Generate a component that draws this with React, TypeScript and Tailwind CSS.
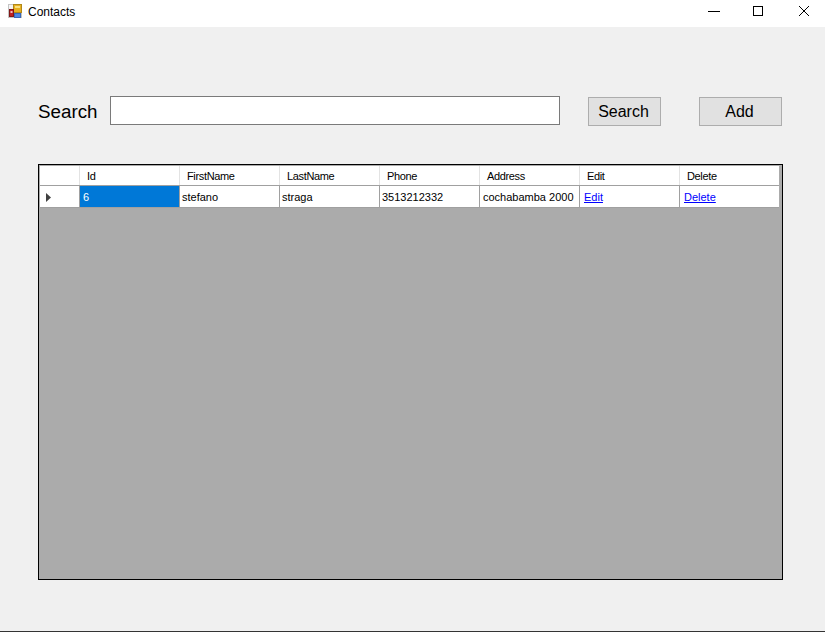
import React from 'react';

const columns = ['Id', 'FirstName', 'LastName', 'Phone', 'Address', 'Edit', 'Delete'];

const AppIcon: React.FC = () => (
  <svg width="14" height="14" viewBox="0 0 14 14" className="shrink-0">
    <rect x="0" y="0" width="14" height="14" fill="#c4c4c4" />
    <rect x="1" y="1" width="12" height="12" fill="#f4f4f4" />
    <rect x="5.5" y="0.5" width="8" height="8" fill="#e8b020" stroke="#b08818" strokeWidth="1" />
    <rect x="7" y="2" width="5" height="2" fill="#f8e080" />
    <rect x="1.5" y="5.5" width="4" height="7" fill="#c02020" stroke="#801818" strokeWidth="1" />
    <rect x="2.5" y="7" width="2" height="2" fill="#f0c0c0" />
    <rect x="6.5" y="9.5" width="6" height="4" fill="#5088e0" stroke="#3868b8" strokeWidth="1" />
  </svg>
);

const TitleBar: React.FC = () => (
  <div className="flex h-[27px] items-center bg-white">
    <div className="ml-2 mb-[5px] flex items-center gap-[6px]">
      <AppIcon />
      <span className="mt-[2px] text-[12px] text-black">Contacts</span>
    </div>
    <div className="ml-auto mb-[5px] flex items-center pr-4">
      <svg width="12" height="10" viewBox="0 0 12 10"><path d="M0 5.5H12" stroke="#000" strokeWidth="1" /></svg>
      <svg className="ml-[33px]" width="10" height="10" viewBox="0 0 10 10"><rect x="0.5" y="0.5" width="9" height="9" fill="none" stroke="#000" strokeWidth="1" /></svg>
      <svg className="ml-9" width="10" height="10" viewBox="0 0 10 10"><path d="M0 0L10 10M10 0L0 10" stroke="#000" strokeWidth="1" /></svg>
    </div>
  </div>
);

const Grid: React.FC = () => (
  <div className="mt-[38px] ml-[38px] h-[416px] w-[745px] border border-black bg-[#ababab] pl-px pt-px">
    {/* Column headers */}
    <div className="flex h-5 w-[739px] border-b border-[#a0a0a0] bg-white">
      <div className="w-10 border-r border-[#e3e3e3]" />
      {columns.map((c) => (
        <div
          key={c}
          className="flex w-[100px] items-center border-r border-[#e3e3e3] pl-[7px] pt-px text-[11px] tracking-[-0.35px] text-black last:w-[99px] last:border-r-0"
        >
          {c}
        </div>
      ))}
    </div>
    {/* Only row */}
    <div className="flex h-[22px] w-[739px] border-b border-[#a0a0a0] text-[11px] text-black">
      <div className="flex w-10 items-center border-r border-[#a0a0a0] bg-white pl-[6px] pt-px">
        <svg width="5" height="9" viewBox="0 0 5 9"><path d="M0 0L5 4.5L0 9Z" fill="#404040" /></svg>
      </div>
      <div className="flex w-[100px] items-center border-r border-[#a0a0a0] bg-[#0078d7] pl-[3px] pt-px text-white">6</div>
      <div className="flex w-[100px] items-center border-r border-[#a0a0a0] bg-white pl-[2px] pt-px">stefano</div>
      <div className="flex w-[100px] items-center border-r border-[#a0a0a0] bg-white pl-[2px] pt-px">straga</div>
      <div className="flex w-[100px] items-center border-r border-[#a0a0a0] bg-white pl-[2px] pt-px">3513212332</div>
      <div className="flex w-[100px] items-center whitespace-nowrap border-r border-[#a0a0a0] bg-white pl-[3px] pt-px">cochabamba 2000</div>
      <div className="flex w-[100px] items-center border-r border-[#a0a0a0] bg-white pl-[4px] pt-px">
        <a className="text-[#0000ff] underline">Edit</a>
      </div>
      <div className="flex w-[99px] items-center bg-white pl-[4px] pt-px">
        <a className="text-[#0000ff] underline">Delete</a>
      </div>
    </div>
  </div>
);

export default function App() {
  return (
    <div className="h-[632px] w-[825px] overflow-hidden bg-[#f0f0f0] font-['Liberation_Sans',Arial,sans-serif]">
      <TitleBar />
      <div className="flex h-[605px] flex-col border-b border-[#333]">
        {/* Search row */}
        <div className="ml-[38px] mt-[69px] flex items-start">
          <span className="mt-[3px] w-[72px] text-[18.8px] leading-[26px] text-black">Search</span>
          <input className="h-[29px] w-[450px] border border-[#7a7a7a] bg-white outline-none" />
          <button className="ml-7 mt-px h-[29px] w-[73px] border border-[#adadad] bg-[#e1e1e1] pr-[2px] text-[16px] text-black">
            Search
          </button>
          <button className="ml-[38px] mt-px h-[29px] w-[83px] border border-[#adadad] bg-[#e1e1e1] pr-[2px] text-[16px] text-black">
            Add
          </button>
        </div>
        <Grid />
      </div>
    </div>
  );
}
